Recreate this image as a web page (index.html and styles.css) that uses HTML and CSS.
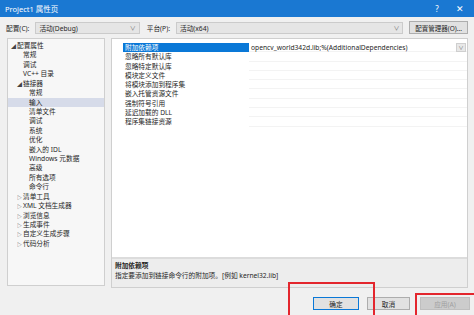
FILE: index.html
```html
<!DOCTYPE html>
<html>
    <head>
        <meta charset="utf-8">
        <title>Project1 属性页</title>
        <link rel="stylesheet" href="styles.css">
    </head>
    <body>
        <div class="window">
            <div class="title_bar">
                <span class="title">Project1 属性页</span>
                <span class="title_btn">?</span>
                <span class="title_btn close">✕</span>
            </div>
            <div class="tool_bar">
                <span class="label">配置(C):</span>
                <div class="combo config"><span>活动(Debug)</span><span class="arrow">∨</span></div>
                <span class="label">平台(P):</span>
                <div class="combo platform"><span>活动(x64)</span><span class="arrow">∨</span></div>
                <div class="btn manager">配置管理器(O)...</div>
            </div>
            <div class="main">
                <div class="tree">
                    <div class="node lv0"><span class="tri open">◢</span>配置属性</div>
                    <div class="node lv1">常规</div>
                    <div class="node lv1">调试</div>
                    <div class="node lv1">VC++ 目录</div>
                    <div class="node lv1b"><span class="tri open">◢</span>链接器</div>
                    <div class="node lv2">常规</div>
                    <div class="node lv2 selected">输入</div>
                    <div class="node lv2">清单文件</div>
                    <div class="node lv2">调试</div>
                    <div class="node lv2">系统</div>
                    <div class="node lv2">优化</div>
                    <div class="node lv2">嵌入的 IDL</div>
                    <div class="node lv2">Windows 元数据</div>
                    <div class="node lv2">高级</div>
                    <div class="node lv2">所有选项</div>
                    <div class="node lv2">命令行</div>
                    <div class="node lv1b"><span class="tri">▷</span>清单工具</div>
                    <div class="node lv1b"><span class="tri">▷</span>XML 文档生成器</div>
                    <div class="node lv1b"><span class="tri">▷</span>浏览信息</div>
                    <div class="node lv1b"><span class="tri">▷</span>生成事件</div>
                    <div class="node lv1b"><span class="tri">▷</span>自定义生成步骤</div>
                    <div class="node lv1b"><span class="tri">▷</span>代码分析</div>
                </div>
                <div class="props">
                    <div class="grid">
                        <div class="row selected">
                            <span class="name">附加依赖项</span>
                            <span class="value">opencv_world342d.lib;%(AdditionalDependencies)<span class="drop">∨</span></span>
                        </div>
                        <div class="row"><span class="name">忽略所有默认库</span><span class="value"></span></div>
                        <div class="row"><span class="name">忽略特定默认库</span><span class="value"></span></div>
                        <div class="row"><span class="name">模块定义文件</span><span class="value"></span></div>
                        <div class="row"><span class="name">将模块添加到程序集</span><span class="value"></span></div>
                        <div class="row"><span class="name">嵌入托管资源文件</span><span class="value"></span></div>
                        <div class="row"><span class="name">强制符号引用</span><span class="value"></span></div>
                        <div class="row"><span class="name">延迟加载的 DLL</span><span class="value"></span></div>
                        <div class="row"><span class="name">程序集链接资源</span><span class="value"></span></div>
                    </div>
                    <div class="desc">
                        <div class="desc_title">附加依赖项</div>
                        <div>指定要添加到链接命令行的附加项。[例如 kernel32.lib]</div>
                    </div>
                </div>
            </div>
            <div class="bottom_bar">
                <div class="btn ok">确定</div>
                <div class="btn cancel">取消</div>
                <div class="btn disabled">应用(A)</div>
            </div>
            <div class="mark mark_ok"></div>
            <div class="mark mark_apply"></div>
        </div>
    </body>
</html>
```

FILE: styles.css
```css
body {
    margin:0;
    font-family:"Noto Sans", "Noto Sans CJK SC", sans-serif;
    font-size:6.7px;
    color:#262626;
}
.window {
    position:relative;
    width:474px;
    height:315px;
    background:#f0f0f0;
    overflow:hidden;
}
.title_bar {
    height:17px;
    background:#1a78d2;
    color:#fff;
    display:flex;
    align-items:center;
    padding-left:5px;
    font-size:7.5px;
}
.title {
    flex:1;
}
.title_btn {
    width:22px;
    text-align:center;
    font-size:8px;
}
.title_btn.close {
    width:24px;
    margin-right:2px;
    font-size:9px;
}
.tool_bar {
    display:flex;
    align-items:center;
    height:21px;
    padding:0 6px;
    white-space:nowrap;
}
.label {
    margin-right:6px;
}
.combo {
    height:10px;
    display:flex;
    align-items:center;
    justify-content:space-between;
    background:#e5e5e5;
    border:1px solid #cbcbcb;
    padding:0 3px;
}
.combo.config {
    width:97px;
    margin-right:7px;
}
.combo.platform {
    width:221px;
    margin-right:6px;
}
.arrow {
    color:#777;
    font-size:6px;
}
.btn {
    height:11px;
    display:flex;
    align-items:center;
    justify-content:center;
    background:#e1e1e1;
    border:1px solid #adadad;
    white-space:nowrap;
}
.btn.manager {
    width:57px;
    font-size:6.5px;
}
.main {
    display:flex;
    padding:0 6px 0 7px;
    height:250px;
}
.tree {
    width:98px;
    height:248px;
    background:#f7f7f7;
    border:1px solid #cfcfcf;
    padding-top:2px;
    box-sizing:border-box;
}
.node {
    height:9.43px;
    line-height:9.43px;
    white-space:nowrap;
}
.node.lv0 { padding-left:3px; }
.node.lv1 { padding-left:15px; }
.node.lv1b { padding-left:9px; }
.node.lv2 { padding-left:21px; }
.node.selected {
    background:#d6dbe9;
}
.tri {
    display:inline-block;
    width:6px;
    font-size:5px;
    color:#444;
}
.props {
    margin-left:6px;
    flex:1;
    height:250px;
    border:1px solid #cfcfcf;
    box-sizing:border-box;
    display:flex;
    flex-direction:column;
}
.grid {
    flex:1;
    background:#fff;
    padding:4px 0 0 11px;
    border-bottom:2px solid #dcdcdc;
}
.row {
    display:flex;
    height:9.3px;
    line-height:9.3px;
}
.name {
    width:124px;
    padding-left:2px;
    flex-shrink:0;
}
.value {
    flex:1;
    position:relative;
    padding-left:2px;
    border-bottom:1px solid #f3f3f3;
    box-sizing:border-box;
}
.row.selected .name {
    background:#0a78d7;
    color:#fff;
}
.drop {
    position:absolute;
    right:1px;
    top:0;
    width:8px;
    height:7px;
    line-height:7px;
    text-align:center;
    font-size:5px;
    color:#666;
    background:#e8e8e8;
    border:1px solid #cfcfcf;
}
.desc {
    height:28px;
    background:#ededed;
    padding:2px 3px;
    box-sizing:border-box;
    line-height:10px;
}
.desc_title {
    font-weight:bold;
}
.bottom_bar {
    display:flex;
    justify-content:flex-end;
    padding:9px 4px 0 0;
}
.btn.ok {
    width:44px;
    border-color:#0a78d7;
}
.btn.cancel {
    width:41px;
    margin-left:8px;
}
.btn.disabled {
    width:48px;
    margin-left:10px;
    background:#cccccc;
    border-color:#bfbfbf;
    color:#a0a0a0;
}
.mark {
    position:absolute;
    border:2px solid #e3262d;
}
.mark_ok {
    left:288px;
    top:282px;
    width:83px;
    height:40px;
}
.mark_apply {
    left:415px;
    top:293px;
    width:70px;
    height:40px;
}
```
